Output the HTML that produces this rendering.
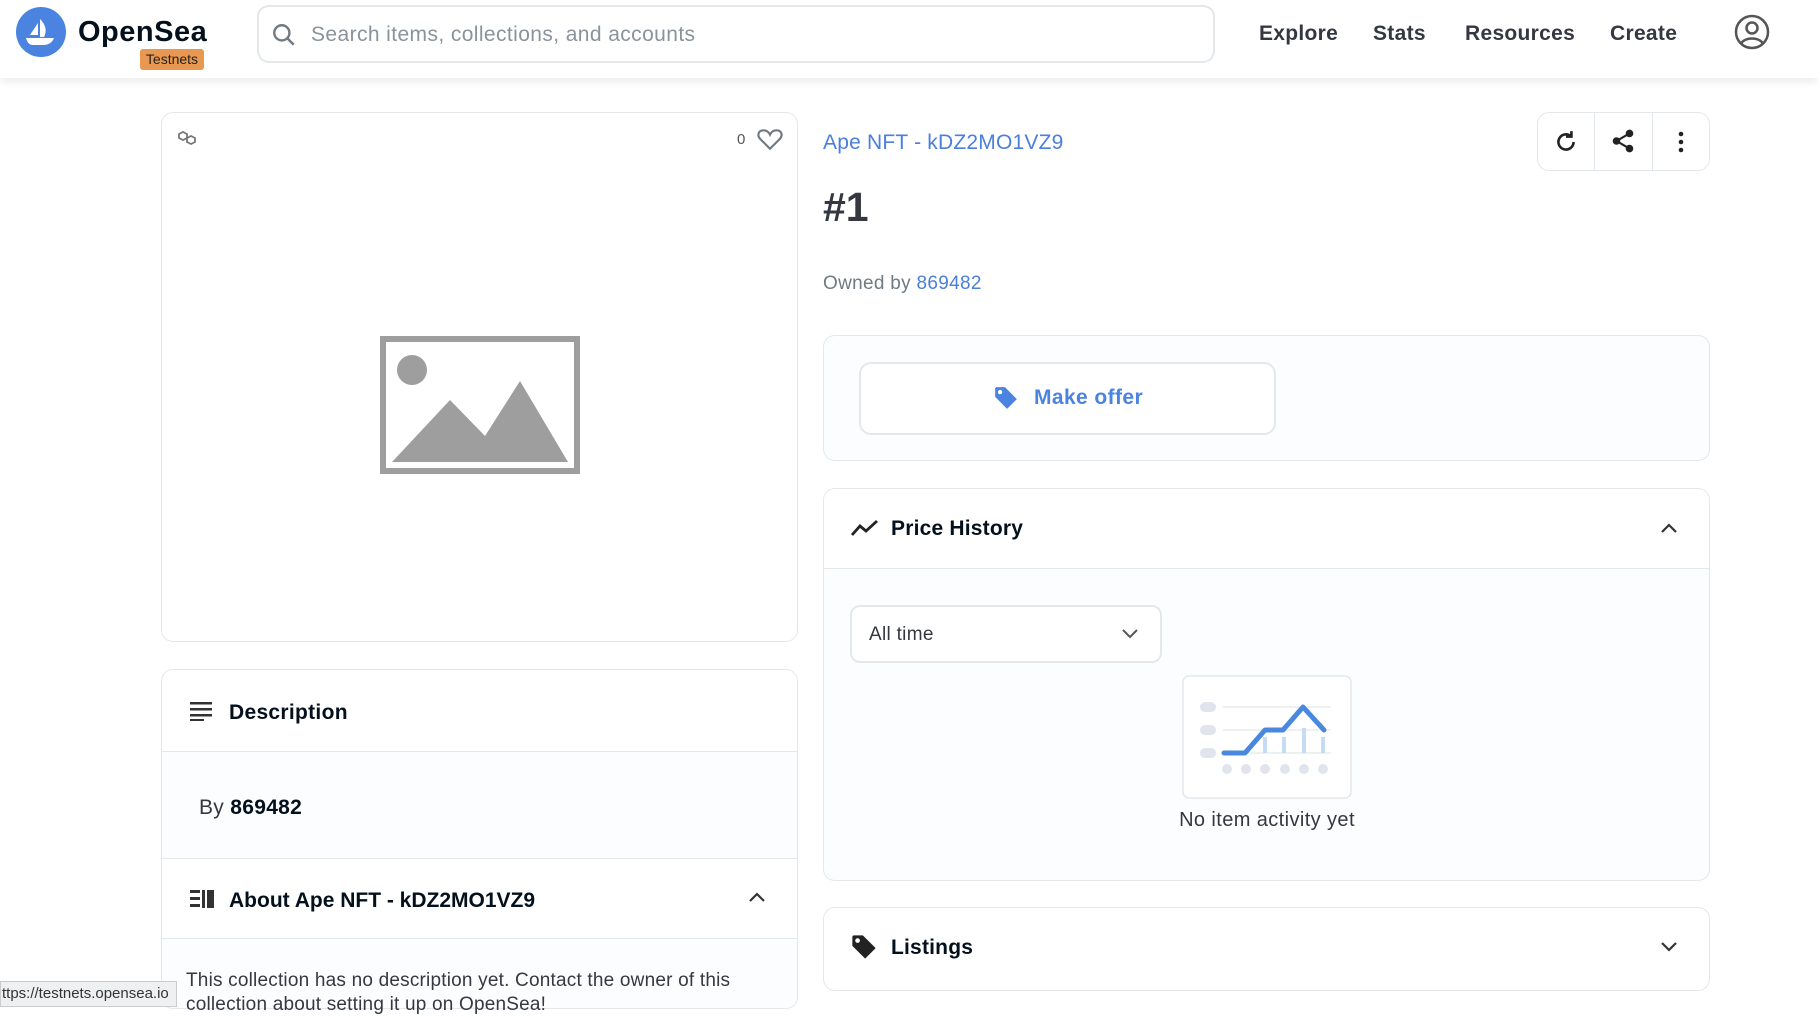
<!DOCTYPE html>
<html><head><meta charset="utf-8"><style>
*{box-sizing:border-box;margin:0;padding:0}
body{width:1818px;height:1007px;overflow:hidden;background:#fff;font-family:"Liberation Sans",sans-serif;color:#04111d;position:relative}
.a{position:absolute}
.hdr{left:0;top:0;width:1818px;height:78px;background:#fff;box-shadow:0 4px 8px rgba(0,0,0,.08)}
.card{border:1px solid #e5e8eb;border-radius:12px;background:#fff}
.nav{top:22px;font-size:21px;font-weight:bold;color:#353840;letter-spacing:.3px}
.blue{color:#4a7fdc}
</style></head><body>
<div class="a hdr">
 <svg class="a" style="left:16px;top:7px" width="50" height="50" viewBox="0 0 50 50"><circle cx="25" cy="25" r="25" fill="#4a84e0"/><path d="M14 28 L22 16 L22 28Z" fill="#fff"/><path d="M24 12 C30 18 31 24 28 30 L24 30Z" fill="#fff"/><path d="M10 31 H38 C36 36 32 38 27 38 H17 C13 38 11 35 10 31Z" fill="#fff"/></svg>
 <div class="a" style="left:78px;top:16px;font-size:29px;font-weight:bold;color:#04111d;letter-spacing:.5px">OpenSea</div>
 <div class="a" style="left:140px;top:49px;width:64px;height:21px;background:#e89850;border-radius:3px;font-size:14px;text-align:center;line-height:21px;color:#222">Testnets</div>
 <div class="a" style="left:257px;top:5px;width:958px;height:58px;border:2px solid #e5e8eb;border-radius:12px"></div>
 <svg class="a" style="left:271px;top:22px" width="26" height="26" viewBox="0 0 24 24" fill="none" stroke="#707a83" stroke-width="2.2"><circle cx="10" cy="10" r="7"/><path d="M15 15 L21 21"/></svg>
 <div class="a" style="left:311px;top:23px;font-size:21px;color:#8a939b;letter-spacing:.4px">Search items, collections, and accounts</div>
 <div class="a nav" style="left:1259px">Explore</div>
 <div class="a nav" style="left:1373px">Stats</div>
 <div class="a nav" style="left:1465px">Resources</div>
 <div class="a nav" style="left:1610px">Create</div>
 <svg class="a" style="left:1733px;top:13px" width="38" height="38" viewBox="0 0 38 38" fill="none" stroke="#555" stroke-width="2.5"><circle cx="19" cy="19" r="16"/><circle cx="19" cy="15" r="5.5"/><path d="M8.5 30 C12 24 26 24 29.5 30"/></svg>
</div>

<div class="a card" style="left:161px;top:112px;width:637px;height:530px"></div>
<svg class="a" style="left:176px;top:129px" width="22" height="18" viewBox="0 0 22 18" fill="none" stroke="#777" stroke-width="1.8"><path d="M3 5 L7 3 L11 5 L11 9 L7 11 L3 9Z"/><path d="M11 9 L15 7 L19 9 L19 13 L15 15 L11 13Z"/></svg>
<div class="a" style="left:737px;top:131px;font-size:15px;color:#555">0</div>
<svg class="a" style="left:757px;top:127px" width="26" height="24" viewBox="0 0 24 22" fill="none" stroke="#707a83" stroke-width="2"><path d="M12 20 L3 11 C0 8 1 3 6 3 C9 3 11 5 12 7 C13 5 15 3 18 3 C23 3 24 8 21 11Z"/></svg>
<svg class="a" style="left:380px;top:336px" width="200" height="138" viewBox="0 0 200 138"><rect x="3" y="3" width="194" height="132" fill="#fff" stroke="#9e9e9e" stroke-width="6"/><circle cx="32" cy="34" r="15" fill="#9e9e9e"/><path d="M12 126 L70 64 L105 100 L140 45 L188 126Z" fill="#9e9e9e"/></svg>

<div class="a card" style="left:161px;top:669px;width:637px;height:340px;overflow:hidden">
 <div style="height:82px;border-bottom:1px solid #e5e8eb"></div>
 <div style="height:107px;background:#fbfdff;border-bottom:1px solid #e5e8eb"></div>
 <div style="height:80px;border-bottom:1px solid #e5e8eb"></div>
 <div style="height:80px;background:#fbfdff"></div>
</div>
<svg class="a" style="left:190px;top:701px" width="22" height="20" viewBox="0 0 22 20" fill="#333"><rect x="0" y="1" width="22" height="2.5"/><rect x="0" y="7" width="22" height="2.5"/><rect x="0" y="13" width="22" height="2.5"/><rect x="0" y="18" width="14" height="2"/></svg>
<div class="a" style="left:229px;top:701px;font-size:21px;font-weight:bold;letter-spacing:.3px">Description</div>
<div class="a" style="left:199px;top:796px;font-size:21px;color:#353840;letter-spacing:.3px">By <b style="color:#04111d">869482</b></div>
<svg class="a" style="left:190px;top:889px" width="24" height="20" viewBox="0 0 24 20" fill="#333"><rect x="0" y="1" width="10" height="3"/><rect x="0" y="8" width="10" height="3"/><rect x="0" y="15" width="10" height="3"/><rect x="12" y="1" width="3" height="18"/><rect x="17" y="1" width="7" height="18"/></svg>
<div class="a" style="left:229px;top:889px;font-size:21px;font-weight:bold">About Ape NFT - kDZ2MO1VZ9</div>
<svg class="a" style="left:748px;top:891px" width="18" height="12" viewBox="0 0 18 12" fill="none" stroke="#333" stroke-width="2.2"><path d="M2 10 L9 3 L16 10"/></svg>
<div class="a" style="left:186px;top:969px;font-size:19px;color:#353840;line-height:24px;letter-spacing:.2px">This collection has no description yet. Contact the owner of this<br>collection about setting it up on OpenSea!</div>
<div class="a" style="left:0;top:981px;width:177px;height:26px;background:#eef0f2;border:1px solid #ccc;font-size:15px;color:#333;line-height:24px;padding-left:1px">ttps://testnets.opensea.io</div>

<div class="a blue" style="left:823px;top:131px;font-size:21px;letter-spacing:.2px">Ape NFT - kDZ2MO1VZ9</div>
<div class="a" style="left:823px;top:184px;font-size:41px;font-weight:bold;color:#353840">#1</div>
<div class="a" style="left:823px;top:273px;font-size:19px;color:#707a83;letter-spacing:.3px">Owned by <span class="blue">869482</span></div>
<div class="a card" style="left:1537px;top:112px;width:173px;height:59px;display:flex">
 <div style="flex:1;border-right:1px solid #e5e8eb"></div><div style="flex:1;border-right:1px solid #e5e8eb"></div><div style="flex:1"></div>
</div>
<svg class="a" style="left:1553px;top:129px" width="26" height="26" viewBox="0 0 24 24" fill="none" stroke="#222" stroke-width="2.4"><path d="M19 12 A7 7 0 1 1 16 6.2"/><path d="M17 2 L17 7 L12 7" /></svg>
<svg class="a" style="left:1610px;top:128px" width="26" height="26" viewBox="0 0 24 24" fill="#222" stroke="#222" stroke-width="2"><circle cx="18" cy="5" r="2.5"/><circle cx="6" cy="12" r="2.5"/><circle cx="18" cy="19" r="2.5"/><path d="M6 12 L18 5 M6 12 L18 19"/></svg>
<svg class="a" style="left:1677px;top:130px" width="8" height="24" viewBox="0 0 8 24" fill="#222"><circle cx="4" cy="4" r="2.3"/><circle cx="4" cy="12" r="2.3"/><circle cx="4" cy="20" r="2.3"/></svg>

<div class="a card" style="left:823px;top:335px;width:887px;height:126px;background:#fbfdff"></div>
<div class="a" style="left:859px;top:362px;width:417px;height:73px;border:2px solid #e5e8eb;border-radius:12px;background:#fff"></div>
<svg class="a" style="left:993px;top:385px" width="26" height="26" viewBox="0 0 24 24" fill="#4a84e0"><path d="M2 3 L2 11 L13 22 L22 13 L11 2 L3 2Z"/><circle cx="6.5" cy="6.5" r="2" fill="#fff"/></svg>
<div class="a" style="left:1034px;top:386px;font-size:21px;font-weight:bold;color:#4a84e0;letter-spacing:.4px">Make offer</div>

<div class="a card" style="left:823px;top:488px;width:887px;height:393px;background:#fbfdff;overflow:hidden"><div style="height:80px;background:#fff;border-bottom:1px solid #e5e8eb"></div></div>
<svg class="a" style="left:850px;top:518px" width="30" height="20" viewBox="0 0 30 20" fill="none" stroke="#222" stroke-width="2.8"><path d="M2 17 L10 8 L16 13 L27 3"/></svg>
<div class="a" style="left:891px;top:517px;font-size:21px;font-weight:bold;letter-spacing:.2px">Price History</div>
<svg class="a" style="left:1660px;top:522px" width="18" height="12" viewBox="0 0 18 12" fill="none" stroke="#333" stroke-width="2.2"><path d="M2 10 L9 3 L16 10"/></svg>
<div class="a" style="left:850px;top:605px;width:312px;height:58px;border:2px solid #e5e8eb;border-radius:10px;background:#fff"></div>
<div class="a" style="left:869px;top:624px;font-size:19px;color:#353840;letter-spacing:.3px">All time</div>
<svg class="a" style="left:1121px;top:628px" width="18" height="12" viewBox="0 0 18 12" fill="none" stroke="#555" stroke-width="2"><path d="M2 2 L9 9 L16 2"/></svg>
<svg class="a" style="left:1182px;top:675px" width="170" height="124" viewBox="0 0 170 124"><rect x="1" y="1" width="168" height="122" rx="6" fill="#fff" stroke="#e5e8eb" stroke-width="1.5"/><rect x="18" y="27" width="16" height="10" rx="5" fill="#e1e4ec"/><rect x="18" y="50" width="16" height="10" rx="5" fill="#e1e4ec"/><rect x="18" y="73" width="16" height="10" rx="5" fill="#e1e4ec"/><path d="M41 32 H149 M41 55 H149 M41 78 H149" stroke="#e5e8eb" stroke-width="1.2"/><g fill="#c5dcf4"><rect x="81" y="62" width="4" height="16"/><rect x="100" y="62" width="4" height="16"/><rect x="120" y="53" width="4" height="25"/><rect x="139" y="62" width="4" height="16"/></g><path d="M42 78 H63 L83 55 H101 L121 32 L142 55" fill="none" stroke="#4a88e0" stroke-width="5" stroke-linejoin="round" stroke-linecap="round"/><g fill="#e1e4ec"><circle cx="45" cy="94" r="5"/><circle cx="64" cy="94" r="5"/><circle cx="83" cy="94" r="5"/><circle cx="103" cy="94" r="5"/><circle cx="122" cy="94" r="5"/><circle cx="141" cy="94" r="5"/></g></svg>
<div class="a" style="left:1067px;top:809px;width:400px;text-align:center;font-size:20px;color:#353840;letter-spacing:.4px">No item activity yet</div>

<div class="a card" style="left:823px;top:907px;width:887px;height:84px"></div>
<svg class="a" style="left:850px;top:933px" width="28" height="28" viewBox="0 0 24 24" fill="#222"><path d="M2 3 L2 11 L13 22 L22 13 L11 2 L3 2Z"/><circle cx="6.5" cy="6.5" r="2" fill="#fff"/></svg>
<div class="a" style="left:891px;top:936px;font-size:21px;font-weight:bold;letter-spacing:.2px">Listings</div>
<svg class="a" style="left:1660px;top:941px" width="18" height="12" viewBox="0 0 18 12" fill="none" stroke="#333" stroke-width="2.2"><path d="M2 2 L9 9 L16 2"/></svg>
</body></html>
